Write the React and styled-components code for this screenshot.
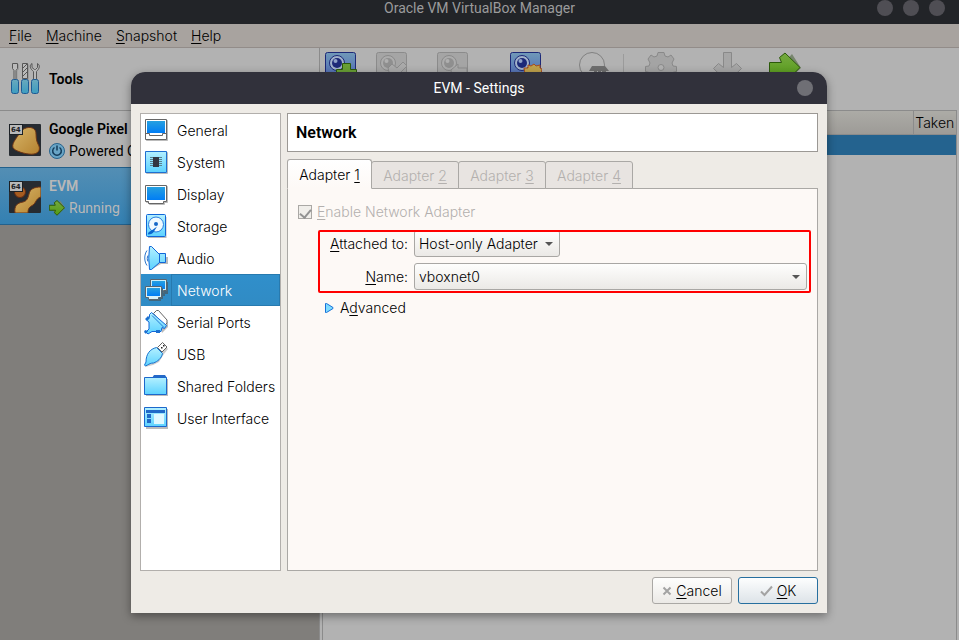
import React, { useState } from 'react'
import styled, { createGlobalStyle } from 'styled-components'

const GlobalStyle = createGlobalStyle`
    *{
        box-sizing:border-box;
    }
    body{
        margin:0;
        background:#807e7b;
        color:#000;
        font-family:Inter, Roboto, sans-serif;
        font-size:14px;
        font-weight:300;
        line-height:20px;
    }
    button, select, input{
        font:inherit;
        color:inherit;
    }
    u{
        text-underline-offset:2px;
        text-decoration-thickness:1px;
    }
`

const Defs = () => (
    <svg width="0" height="0" style={{ position: 'absolute' }} aria-hidden="true">
        <defs>
            <linearGradient id="screen" x1="0" y1="0" x2="0" y2="1">
                <stop offset="0" stopColor="#26a0e0" />
                <stop offset="1" stopColor="#007df5" />
            </linearGradient>
            <linearGradient id="ice" x1="0" y1="0" x2="0" y2="1">
                <stop offset="0" stopColor="#b4f0ff" />
                <stop offset="1" stopColor="#5cd2ff" />
            </linearGradient>
            <linearGradient id="gold" x1="0" y1="0" x2="1" y2="1">
                <stop offset="0" stopColor="#d6b468" />
                <stop offset="1" stopColor="#b5822f" />
            </linearGradient>
            <linearGradient id="handle" x1="0" y1="0" x2="0" y2="1">
                <stop offset="0" stopColor="#6aa9bd" />
                <stop offset="1" stopColor="#3c9cc0" />
            </linearGradient>
            <linearGradient id="camera" x1="0" y1="0" x2="0" y2="1">
                <stop offset="0" stopColor="#7099b8" />
                <stop offset="1" stopColor="#4961b5" />
            </linearGradient>
            <linearGradient id="leaf" x1="0" y1="0" x2="0" y2="1">
                <stop offset="0" stopColor="#75a941" />
                <stop offset="1" stopColor="#529b12" />
            </linearGradient>
        </defs>
    </svg>
)

const icons = {
    General: (
        <>
            <path d="M2.5 2.5h21v20h-21z" fill="#bbb" stroke="#bbb" />
            <path d="M1.5 1.5h21v20h-21z" fill="#fff" stroke="#666" />
            <path d="M3 3h18v12H3z" fill="url(#screen)" />
            <path d="M1.5 15.5h4v2h13v-2h4" fill="none" stroke="#666" />
        </>
    ),
    System: (
        <>
            <path d="M2.5 2.5h21v21h-21z" fill="none" stroke="#bbb" />
            <path d="M1.5 1.5h21v21h-21z" fill="url(#ice)" stroke="#1f6fd0" />
            <path d="M6 7.5h12M6 9.5h12M6 11.5h12M6 13.5h12M6 15.5h12" stroke="#5b7f8d" />
            <path d="M9 7h6v10H9z" fill="#333641" />
        </>
    ),
    Display: (
        <>
            <path d="M2.5 4.5h21v16h-3v2h-15v-2h-3z" fill="#bbb" stroke="#bbb" />
            <path d="M1.5 3.5h21v16h-3v2h-15v-2h-3z" fill="#fff" stroke="#666" />
            <path d="M3 5h18v13H3z" fill="url(#screen)" />
        </>
    ),
    Storage: (
        <>
            <path d="M4 3h18.5v21H4z" fill="#bbb" />
            <rect x="2.5" y=".5" width="19" height="22" rx="1" fill="url(#ice)" stroke="#1166d8" />
            <circle cx="12" cy="10.5" r="7.5" fill="#eefaff" stroke="#287de0" />
            <circle cx="12" cy="10" r="2" fill="#1468c8" />
            <path d="M4 20.5c0-3 2-3 5-5l4-3-3 5c-1 2-3 3-6 3z" fill="#0967cf" />
        </>
    ),
    Audio: (
        <>
            <path d="M8 5l8 6h8v7h-7l-9 5z" fill="#bbb" />
            <path d="M5.5.5h2l8 8v8l-8 7h-2q-1.5-11 0-23zM15.5 7.5h6v9h-6z" fill="url(#ice)" stroke="#1166d8" />
            <path d="M3 4.5c-3 4-3 11 0 15M4 9.5c-1 2-1 4 0 6" fill="none" stroke="#2b75cc" />
        </>
    ),
    Network: (
        <>
            <path d="M8 4h16v12h-3v2h-9z" fill="#41677d" />
            <path d="M6.5 1.5h16v11h-3v2h-13z" fill="#c9eefa" stroke="#59656d" />
            <path d="M8 3h13v8H8z" fill="url(#screen)" />
            <path d="M3 10h16v11h-2v2H5z" fill="#41677d" />
            <path d="M1.5 8.5h16v11h-3v2h-10v-2h-3z" fill="#d7f1f9" stroke="#59656d" />
            <path d="M3 10h13v8H3z" fill="url(#screen)" />
        </>
    ),
    'Serial Ports': (
        <>
            <path d="M14 3l10 10v4l-6 6z" fill="#bbb" />
            <path d="M9.5 3.5l3-3h2l8.5 9.5v3l-3 3z" fill="#fff" stroke="#666" />
            <path d="M5.500 4.500l2-2 15 13-2 3-2.500-1-1 4h-9l-4 2.500-2-2 3-3v-7l-2.500-2 3-3z" fill="url(#ice)" stroke="#1166d8" />
            <path d="M8 5.5l12 12" stroke="#1f79d4" />
            <path d="M12 20h4v3h-4zM1 20l3 1-2 3-2-2zM1 9l3-3 2 2-3 3z" fill="#1c70d0" />
        </>
    ),
    USB: (
        <>
            <path d="M15 4l4-3 5 6-4 5-5 8-6 3-8 2z" fill="#ccc" />
            <path d="M13.5 5.5l5-5 4.5 4.5-5 5z" fill="#fff" stroke="#666" />
            <path d="M17 5h1.5v1.5H17zM19 3h1.5v1.5H19z" fill="#222" />
            <path d="M12.5 5.5l6 6c-1 5-5 8-9 9.5-3 0-4 1-6 2l-2 1-1-1 1.5-3c0-8 4-13 10.5-14.5z" fill="url(#ice)" stroke="#1673d0" />
        </>
    ),
    'Shared Folders': (
        <>
            <path d="M2 5h22v17H2z" fill="#bbb" />
            <path d="M8 4l2-3h11l2 3z" fill="#2569c8" />
            <path d="M.5 3.5h22v17H.5z" fill="url(#ice)" stroke="#1c68cc" />
        </>
    ),
    'User Interface': (
        <>
            <path d="M2 3h22v20H2z" fill="#bbb" />
            <path d="M.5 1.5h22v19H.5z" fill="url(#ice)" stroke="#1c68cc" />
            <path d="M2 4h19v3H2zM3 8h4v4H3zM3 13h4v4H3z" fill="#2069c8" />
            <path d="M10 8h10v10H10z" fill="#e0f8ff" />
        </>
    ),
}

const ToolsIcon = () => (
    <svg width="32" height="34" viewBox="0 0 32 34">
        <g fill="none" stroke="#9c9c9c" transform="translate(1 1)">
            <path d="M2.5 1.5h5v5l-1.5 1v9H4v-9L2.5 6.5zM12.5 1.5h5v15h-5z" />
        </g>
        <path d="M2.5 1.5h5v5l-1.5 2v9H4v-9L2.5 6.5zM12.5 1.5h5v15h-5zM22 1.5c-3 2-2 5 1.5 8v8h3v-8c3-3 4-6 1-8v4l-2 2h-1l-2.5-2z" fill="#bababa" stroke="#565656" />
        <path d="M13 6l4-4M13 10l4-4M13 14l4-4" stroke="#565656" />
        <g fill="url(#handle)" stroke="#1d5a94">
            <rect x="1.5" y="17.5" width="7" height="14" rx="2" />
            <rect x="11.5" y="17.5" width="7" height="14" rx="2" />
            <rect x="21.5" y="17.5" width="7" height="14" rx="2" />
        </g>
    </svg>
)

const OsIcon = ({ kind }) => (
    <svg width="32" height="32" viewBox="0 0 32 32">
        <rect width="32" height="32" rx="1" fill="#262b31" />
        {kind === 'blob' ? (
            <path d="M12 7c4-4 11-5 14-1 2 3 0 8 3 14 3 5 1 9-4 10-6 1-16-2-20-5-4-4 2-10 7-18z" fill="url(#gold)" stroke="#6f3514" />
        ) : (
            <>
                <path d="M6 32c-1-7 2-10 8-11 4-1 5-4 6-8 1-5 5-7 12-7v10c-5 1-5 6-8 8-4 2-5 4-5 8z" fill="url(#gold)" stroke="#6f3514" />
                <circle cx="11" cy="11" r="5.5" fill="#a65c20" stroke="#642a12" />
            </>
        )}
        <path d="M0 0h14v11H0z" fill="#1b2025" />
        <path d="M1 1h12v9H1z" fill="#b8b8b8" />
        <text x="2" y="8" fontSize="7" fontWeight="700" fill="#1b2025" fontFamily="DejaVu Sans, sans-serif">64</text>
    </svg>
)

const PowerIcon = () => (
    <svg width="16" height="16" viewBox="0 0 16 16">
        <circle cx="8" cy="8" r="7.5" fill="#69a5c6" stroke="#28648d" />
        <path d="M5.5 4.5a4.3 4.3 0 1 0 5 0M8 2.5v5" fill="none" stroke="#133b59" strokeWidth="1.5" />
    </svg>
)

const GreenArrow = ({ size }) => (
    <svg width={size} height={size} viewBox="0 0 32 32">
        <path d="M2 13h11l10-11 9 14-15 14-6-5z" fill="#77856d" />
        <path d="M.5 10.5h12l-2-5 5.5-4.5L31 15.5 16 30.5l-5-5 2-5H.5z" fill="url(#leaf)" stroke="#2c5a0a" strokeWidth={size < 20 ? 2 : 1} />
    </svg>
)

const CameraIcon = ({ off, badge }) => (
    <svg width="32" height="32" viewBox="0 0 32 32">
        <rect x=".5" y=".5" width="30" height="29" rx="2" fill={off ? '#a5a5a5' : 'url(#camera)'} stroke={off ? '#8b8b8b' : '#1d2978'} />
        <circle cx="12" cy="11" r="7.5" fill={off ? '#acacac' : '#a0b1ca'} stroke={off ? '#8b8b8b' : '#1d2978'} />
        <circle cx="12" cy="11" r="5" fill={off ? '#8f8f8f' : '#1d2978'} />
        <circle cx="10.5" cy="9" r="2" fill={off ? '#b0b0b0' : '#8fa2c8'} />
        {badge === 'plus' && <path d="M17.5 11.5h8v6h6v12h-20v-12h6z" fill="#69a035" stroke="#2c5a0a" />}
        {badge === 'cut' && <path d="M12 16l4-4 5 4 6-6 4 4-6 6 2 4H14z" fill="#aaa" stroke="#8b8b8b" />}
        {badge === 'back' && <path d="M14 18l7-6v4h9v10H15z" fill="#aaa" stroke="#8b8b8b" />}
        {badge === 'star' && <path d="M14 16l4 0 0-3 3 1 3-2 2 2 4-1 0 3 2 1-1 5H15z" fill="#c0a24c" stroke="#a64d20" />}
    </svg>
)

const CloneIcon = () => (
    <svg width="32" height="32" viewBox="0 0 32 32">
        <circle cx="13" cy="13" r="12.5" fill="#b4b4b4" stroke="#818181" />
        <path d="M10 19l3-5h13l4 5h-3v8h-4v-8h-1v8h-3v-8h-1v8h-3v-8z" fill="#6f6f6f" />
    </svg>
)

const GearIcon = () => (
    <svg width="32" height="32" viewBox="0 0 32 32" fill="#a4a4a4" stroke="#898989">
        <path d="M13 .5h6l1 3.5 3 1 3-2 3 4-2 4 1 3 3.5.5v5l-4 1v6H4v-6l-3.5-1v-5l3.5-.5 1-3-2-4 3-4 3 2 3-1z" />
        <circle cx="16" cy="15.5" r="3" fill="#b2b2b2" />
    </svg>
)

const DownIcon = () => (
    <svg width="32" height="32" viewBox="0 0 32 32">
        <path d="M11.5.5h8v15l5-4 5 5L15.5 30 1.5 16.5l5-5 5 4z" fill="#a6a6a6" stroke="#898989" />
    </svg>
)

const pages = Object.keys(icons)

function ManagerWindow() {
    return (
        <Manager>
            <TitleBar>
                <span>Oracle VM VirtualBox Manager</span>
                <WindowButtons>
                    <Dot aria-label="Minimize" />
                    <Dot aria-label="Maximize" />
                    <Dot aria-label="Close" />
                </WindowButtons>
            </TitleBar>
            <MenuBar>
                <MenuButton><u>F</u>ile</MenuButton>
                <MenuButton><u>M</u>achine</MenuButton>
                <MenuButton><u>S</u>napshot</MenuButton>
                <MenuButton><u>H</u>elp</MenuButton>
            </MenuBar>
            <Workspace>
                <Machines>
                    <ToolsItem>
                        <ToolsIcon />
                        <b>Tools</b>
                    </ToolsItem>
                    <MachineItem>
                        <OsIcon kind="blob" />
                        <div>
                            <b>Google Pixel</b>
                            <State><PowerIcon />Powered Off</State>
                        </div>
                    </MachineItem>
                    <MachineItem $active>
                        <OsIcon kind="pipe" />
                        <div>
                            <b>EVM</b>
                            <State><GreenArrow size={16} />Running</State>
                        </div>
                    </MachineItem>
                </Machines>
                <Snapshots>
                    <Toolbar>
                        <Tool $width={51} aria-label="Take"><CameraIcon badge="plus" /></Tool>
                        <Tool $width={61} aria-label="Delete"><CameraIcon off badge="cut" /></Tool>
                        <Tool $width={73} aria-label="Restore"><CameraIcon off badge="back" /></Tool>
                        <Tool $width={69} aria-label="Properties"><CameraIcon badge="star" /></Tool>
                        <Tool $width={44} aria-label="Clone"><CloneIcon /></Tool>
                        <Divider />
                        <Tool $width={67} aria-label="Settings"><GearIcon /></Tool>
                        <Tool $width={57} aria-label="Discard"><DownIcon /></Tool>
                        <Tool $width={32} aria-label="Show"><GreenArrow size={32} /></Tool>
                    </Toolbar>
                    <TableBox>
                        <Table>
                            <thead>
                                <tr>
                                    <th aria-label="Name" />
                                    <TakenHead>Taken</TakenHead>
                                </tr>
                            </thead>
                            <tbody>
                                <tr>
                                    <td />
                                    <td />
                                </tr>
                            </tbody>
                        </Table>
                    </TableBox>
                </Snapshots>
            </Workspace>
        </Manager>
    )
}

function NetworkPage() {
    const [attached, setAttached] = useState('Host-only Adapter')
    return (
        <Page>
            <PageTitle>Network</PageTitle>
            <Tabs role="tablist">
                <Tab role="tab" aria-selected="true" $active>Adapter <u>1</u></Tab>
                <Tab role="tab" disabled>Adapter <u>2</u></Tab>
                <Tab role="tab" disabled>Adapter <u>3</u></Tab>
                <Tab role="tab" disabled>Adapter <u>4</u></Tab>
            </Tabs>
            <Pane>
                <CheckLabel>
                    <CheckBox type="checkbox" defaultChecked disabled />
                    <span><u>E</u>nable Network Adapter</span>
                </CheckLabel>
                <Fields>
                    <FieldLabel htmlFor="attached"><u>A</u>ttached to:</FieldLabel>
                    <SelectBox $width="146px">
                        <Select id="attached" value={attached} onChange={(e) => setAttached(e.target.value)}>
                            <option>Host-only Adapter</option>
                        </Select>
                    </SelectBox>
                    <FieldLabel htmlFor="name"><u>N</u>ame:</FieldLabel>
                    <SelectBox>
                        <Select id="name" defaultValue="vboxnet0">
                            <option>vboxnet0</option>
                        </Select>
                    </SelectBox>
                </Fields>
                <Advanced>
                    <svg width="9" height="12" viewBox="0 0 9 12">
                        <path d="M.5 1.5v9h1l6.5-4v-1l-6.5-4z" fill="#7fdcff" stroke="#1670d8" />
                    </svg>
                    <span>A<u>d</u>vanced</span>
                </Advanced>
            </Pane>
        </Page>
    )
}

export default function App() {
    const [page, setPage] = useState('Network')
    return (
        <>
            <GlobalStyle />
            <Defs />
            <ManagerWindow />
            <Overlay>
                <Dialog role="dialog" aria-label="EVM - Settings">
                    <DialogTitle>
                        <span>EVM - Settings</span>
                        <DialogClose aria-label="Close" />
                    </DialogTitle>
                    <DialogBody>
                        <PageList>
                            {pages.map((name) => (
                                <PageItem key={name} $active={name === page} onClick={() => setPage(name)}>
                                    <IconCell>
                                        <svg width="25" height="25" viewBox="0 0 25 25">{icons[name]}</svg>
                                    </IconCell>
                                    <NameCell $active={name === page}>{name}</NameCell>
                                </PageItem>
                            ))}
                        </PageList>
                        <NetworkPage />
                    </DialogBody>
                    <Footer>
                        <DialogButton>
                            <svg width="10" height="10" viewBox="0 0 10 10">
                                <path d="M1.5 1.5l7 7M8.5 1.5l-7 7" stroke="#a3a3a3" strokeWidth="2" />
                            </svg>
                            <span><u>C</u>ancel</span>
                        </DialogButton>
                        <DialogButton $primary>
                            <svg width="13" height="12" viewBox="0 0 13 12">
                                <path d="M1 6.5l3.5 3.5L12 1.5" fill="none" stroke="#a3a3a3" strokeWidth="2" />
                            </svg>
                            <span><u>O</u>K</span>
                        </DialogButton>
                    </Footer>
                </Dialog>
            </Overlay>
        </>
    )
}

const Manager = styled.div`
    min-height:100vh;
    display:flex;
    flex-direction:column;
`

const TitleBar = styled.header`
    height:24px;
    padding-bottom:8px;
    background:#222428;
    color:#9b9b9c;
    font-family:Roboto, sans-serif;
    font-weight:400;
    line-height:16px;
    display:grid;
    grid-template-columns:1fr auto 1fr;
    align-items:center;
    > span{
        grid-column:2;
    }
`

const WindowButtons = styled.div`
    display:flex;
    justify-content:flex-end;
    gap:10px;
    padding-right:14px;
`

const Dot = styled.button`
    width:16px;
    height:16px;
    padding:0;
    border:none;
    border-radius:50%;
    background:#4f4e54;
`

const MenuBar = styled.nav`
    height:24px;
    padding-left:9px;
    display:flex;
    align-items:center;
    gap:14px;
    background:#a8a39f;
    border-bottom:1px solid #928c89;
`

const MenuButton = styled.button`
    padding:0;
    border:none;
    background:none;
`

const Workspace = styled.main`
    flex:1;
    display:grid;
    grid-template-columns:320px 1fr;
`

const Machines = styled.aside`
    border-right:1px solid #8b8b8b;
    font-family:Roboto, sans-serif;
    font-weight:400;
    b{
        display:block;
        font-weight:600;
    }
`

const ToolsItem = styled.div`
    height:63px;
    padding:0 10px;
    display:flex;
    align-items:center;
    gap:7px;
    background:#b2b2b2;
    border-bottom:1px solid #8b8b8b;
`

const MachineItem = styled.div`
    padding:7px 9px 5px;
    display:flex;
    align-items:center;
    gap:8px;
    line-height:22px;
    white-space:nowrap;
    color:${p => p.$active ? '#b8b8b8' : 'inherit'};
    background:${p => p.$active ? 'linear-gradient(#538eb4, #3380b2)' : '#b2b2b2'};
    border:solid #23618c;
    border-width:${p => p.$active ? '1px 0' : 0};
`

const State = styled.div`
    display:flex;
    align-items:center;
    gap:4px;
`

const Snapshots = styled.section`
    display:flex;
    flex-direction:column;
    background:#b2b2b2;
    padding-right:2px;
`

const Toolbar = styled.div`
    height:62px;
    padding:4px 5px;
    display:flex;
    align-items:flex-start;
`

const Tool = styled.button`
    width:${p => p.$width}px;
    flex-shrink:0;
    padding:0;
    border:none;
    background:none;
    text-align:left;
    svg{
        display:block;
    }
`

const Divider = styled.div`
    width:1px;
    height:48px;
    margin:2px 21px 0 0;
    background:#9b9b9b;
`

const TableBox = styled.div`
    flex:1;
    margin-left:2px;
    border:1px solid #8b8b8b;
    border-bottom:none;
`

const Table = styled.table`
    width:100%;
    table-layout:fixed;
    border-collapse:collapse;
    th, td{
        padding:0;
    }
    th{
        height:23px;
        padding-top:2px;
        font-weight:300;
        background:linear-gradient(#acaba6, #9d9b97);
        border-bottom:1px solid #8b8b8b;
    }
    td{
        height:21px;
        background:#24638f;
    }
`

const TakenHead = styled.th`
    width:43px;
    border-left:1px solid #8b8b8b;
`

const Overlay = styled.div`
    position:absolute;
    inset:0;
    min-height:100vh;
    padding:72px 132px 27px 131px;
    display:flex;
`

const Dialog = styled.section`
    flex:1;
    min-width:0;
    display:flex;
    flex-direction:column;
    background:#eeebe6;
    border-radius:14px 14px 0 0;
    box-shadow:0 3px 10px rgba(0,0,0,0.4);
`

const DialogTitle = styled.header`
    height:32px;
    padding:0 14px;
    display:grid;
    grid-template-columns:1fr auto 1fr;
    align-items:center;
    background:#31313b;
    color:#fff;
    font-family:Roboto, sans-serif;
    font-weight:400;
    border-radius:14px 14px 0 0;
    > span{
        grid-column:2;
    }
`

const DialogClose = styled(Dot)`
    justify-self:end;
    background:#6f6f75;
`

const DialogBody = styled.div`
    flex:1;
    padding:9px 9px 6px;
    display:grid;
    grid-template-columns:141px 1fr;
    gap:6px;
`

const PageList = styled.nav`
    background:#fff;
    border:1px solid #b2afac;
`

const PageItem = styled.button`
    width:100%;
    height:32px;
    padding:0;
    border:none;
    display:flex;
    text-align:left;
    white-space:nowrap;
    background:${p => p.$active ? 'linear-gradient(#308fcb, #308bc4)' : 'none'};
    color:${p => p.$active ? '#fff' : '#000'};
`

const IconCell = styled.span`
    width:30px;
    padding:4px 3px;
    svg{
        display:block;
    }
`

const NameCell = styled.span`
    flex:1;
    height:32px;
    padding-left:5px;
    line-height:32px;
    border:1px solid ${p => p.$active ? '#277aaf' : 'transparent'};
`

const Page = styled.div`
    display:flex;
    flex-direction:column;
    min-width:0;
`

const PageTitle = styled.h1`
    margin:0 0 7px;
    padding:1px 8px 0;
    font-family:Roboto, sans-serif;
    font-size:16px;
    font-weight:600;
    line-height:36px;
    background:#fff;
    border:1px solid #9b9894;
`

const Tabs = styled.div`
    display:flex;
    align-items:flex-end;
`

const Tab = styled.button`
    width:${p => p.$active ? 85 : 88}px;
    height:${p => p.$active ? 30 : 28}px;
    padding:1px 0 0;
    margin-bottom:-1px;
    margin-right:-1px;
    border:1px solid #aaa8a5;
    border-bottom-color:${p => p.$active ? '#fdf9f6' : '#aaa8a5'};
    border-radius:3px 3px 0 0;
    background:${p => p.$active ? 'linear-gradient(#fff, #fdf9f6)' : '#e8e4e1'};
    color:${p => p.$active ? '#000' : '#b3b0ae'};
    z-index:${p => p.$active ? 1 : 0};
`

const Pane = styled.div`
    flex:1;
    padding:13px 10px 0;
    background:#fdf9f6;
    border:1px solid #aaa8a5;
`

const CheckLabel = styled.label`
    display:flex;
    align-items:center;
    gap:5px;
    color:#b3b0ae;
`

const CheckBox = styled.input`
    appearance:none;
    width:14px;
    height:14px;
    margin:0;
    display:grid;
    place-items:center;
    background:#f0eeea;
    border:1px solid #aaa8a5;
    &:checked::after{
        content:"";
        width:5px;
        height:9px;
        border:solid #929292;
        border-width:0 2px 2px 0;
        transform:rotate(40deg);
    }
`

const Fields = styled.div`
    position:relative;
    margin-top:8px;
    padding-left:20px;
    display:grid;
    grid-template-columns:90px 1fr;
    gap:6px;
    align-items:center;
    // red marker round both rows
    &::after{
        content:"";
        position:absolute;
        inset:0 -4px -3px 20px;
        border:2px solid #ff0000;
        border-radius:2px;
        pointer-events:none;
    }
`

const FieldLabel = styled.label`
    text-align:right;
    white-space:nowrap;
`

const SelectBox = styled.div`
    width:${p => p.$width || '100%'};
    display:grid;
    align-items:center;
    &::after{
        content:"";
        grid-area:1 / 1;
        justify-self:end;
        margin-right:7px;
        border:4px solid transparent;
        border-top-color:#555;
        border-bottom:none;
        pointer-events:none;
    }
`

const Select = styled.select`
    grid-area:1 / 1;
    appearance:none;
    width:100%;
    height:27px;
    padding:0 4px;
    border:1px solid #a9a7a4;
    border-radius:3px;
    background:linear-gradient(#fefefd, #ebe9e6);
`

const Advanced = styled.button`
    margin:8px 0 0 27px;
    padding:0;
    display:flex;
    align-items:center;
    gap:6px;
    border:none;
    background:none;
`

const Footer = styled.footer`
    padding:0 9px 9px;
    display:flex;
    justify-content:flex-end;
    gap:6px;
`

const DialogButton = styled.button`
    width:80px;
    height:27px;
    padding:0;
    display:flex;
    align-items:center;
    justify-content:center;
    gap:4px;
    border:1px solid ${p => p.$primary ? '#276f9f' : '#aaa8a5'};
    border-radius:3px;
    background:${p => p.$primary ? 'linear-gradient(#fdfefe, #dde3e8)' : 'linear-gradient(#fefefd, #ebe9e6)'};
`
